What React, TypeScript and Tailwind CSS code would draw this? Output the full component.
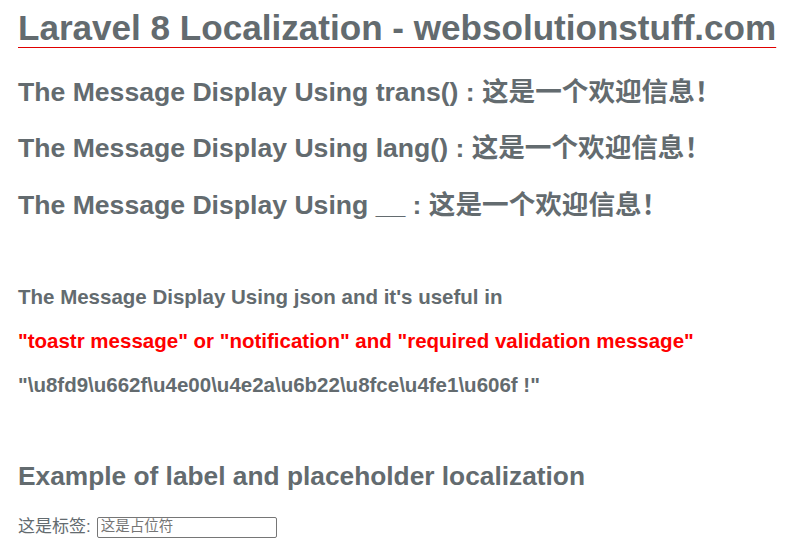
export default function App() {
  const font = { fontFamily: '"Liberation Sans", Arial, "Noto Sans CJK SC", sans-serif' };
  return (
    <div className="min-h-screen bg-white pl-[18px] text-[#636b6f]" style={font}>
      {/* Title */}
      <h1 className="pt-[8px] h-[48px] text-[35.1px] leading-[40px] font-bold underline decoration-[#e00000] decoration-1 underline-offset-[7px] whitespace-nowrap">
        Laravel 8 Localization - websolutionstuff.com
      </h1>

      {/* trans / lang / __ */}
      <h2 className="mt-[26px] text-[26.6px] leading-[36px] font-bold whitespace-nowrap">
        The Message Display Using trans() : 这是一个欢迎信息！
      </h2>
      <h2 className="mt-[20px] text-[26.6px] leading-[36px] font-bold whitespace-nowrap">
        The Message Display Using lang() : 这是一个欢迎信息！
      </h2>
      <h2 className="mt-[21px] text-[26.6px] leading-[36px] font-bold whitespace-nowrap">
        The Message Display Using __ : 这是一个欢迎信息！
      </h2>

      {/* json */}
      <h4 className="mt-[62px] text-[20.5px] leading-[24px] font-bold whitespace-nowrap">
        The Message Display Using json and it's useful in
      </h4>
      <h4 className="mt-[20px] text-[20.5px] leading-[24px] font-bold text-[#ff0000] whitespace-nowrap">
        "toastr message" or "notification" and "required validation message"
      </h4>
      <h4 className="mt-[20px] text-[20.5px] leading-[24px] font-bold whitespace-nowrap">
        "\u8fd9\u662f\u4e00\u4e2a\u6b22\u8fce\u4fe1\u606f !"
      </h4>

      {/* label / placeholder */}
      <h2 className="mt-[61px] text-[26.3px] leading-[36px] font-bold whitespace-nowrap">
        Example of label and placeholder localization
      </h2>
      <div className="mt-[21px] flex items-center h-[24px] text-[17px]">
        <label>这是标签:</label>
        <input
          placeholder="这是占位符"
          className="ml-[6px] w-[180px] h-[21px] border border-[#767676] rounded-[2px] px-[3px] text-[14.5px] placeholder:text-[#757575] outline-none"
          style={font}
        />
      </div>
    </div>
  );
}
